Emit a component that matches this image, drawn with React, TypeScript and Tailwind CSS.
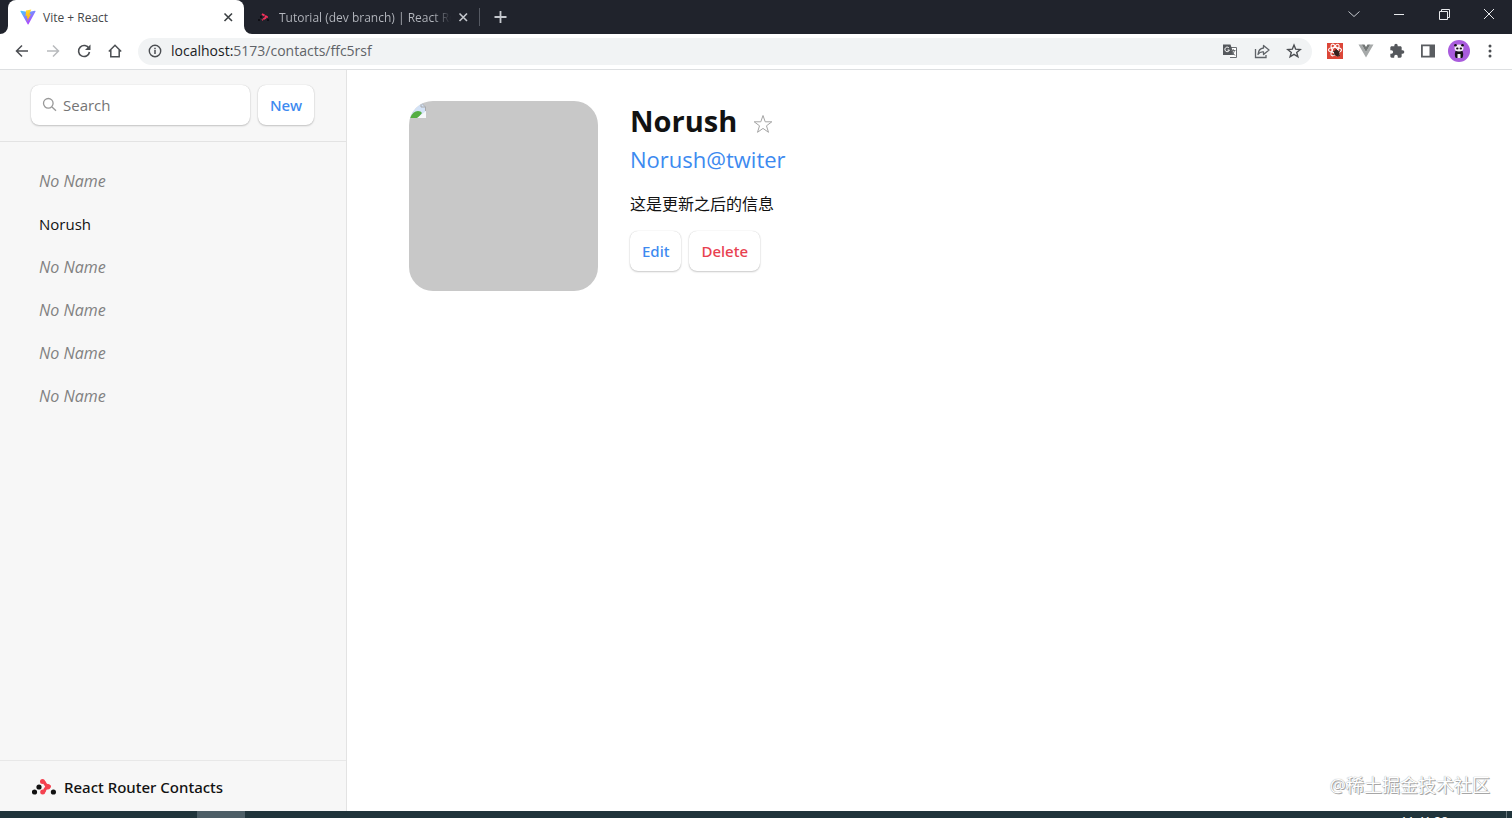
import { useState } from 'react';
import type { ReactNode } from 'react';

interface Contact {
  id: string;
  name?: string;
}

const contacts: Contact[] = [
  { id: 'a1' },
  { id: 'ffc5rsf', name: 'Norush' },
  { id: 'a3' },
  { id: 'a4' },
  { id: 'a5' },
  { id: 'a6' },
];

const cardShadow = 'shadow-[0_0_1px_rgba(0,0,0,0.2),0_1px_2px_rgba(0,0,0,0.2)]';
const buttonBase = `h-10 rounded-lg bg-white px-3 font-['Noto_Sans',sans-serif] text-[15px] font-medium ${cardShadow}`;

function ViteLogo() {
  return (
    <svg className="h-4 w-4 shrink-0" viewBox="0 0 32 32">
      <defs>
        <linearGradient id="vite-body" x1="0" y1="0" x2="0.7" y2="1">
          <stop offset="0" stopColor="#41d1ff" />
          <stop offset="1" stopColor="#bd34fe" />
        </linearGradient>
        <linearGradient id="vite-bolt" x1="0" y1="0" x2="0" y2="1">
          <stop offset="0" stopColor="#ffdd35" />
          <stop offset="1" stopColor="#ffa800" />
        </linearGradient>
      </defs>
      <path d="M31 5 17 30.5a1 1 0 0 1-1.700 0L1 5a1 1 0 0 1 1-1.500l14 2.500 14-2.500a1 1 0 0 1 1 1.500z" fill="url(#vite-body)" />
      <path d="M22.500 1 12 3l-.8 11.500 3.200-.8-.9 5 2-.6-1.200 7 7.500-14.500-3.200.6z" fill="url(#vite-bolt)" />
    </svg>
  );
}

function RouterLogo() {
  return (
    <svg className="h-4 w-6 shrink-0" viewBox="0 0 24 16">
      <path d="M10.500 2.500 12.500 3.300Q13 6.500 17.500 7.500Q13 8.500 12.500 12L10.500 13.300" fill="none" stroke="#f44250" strokeWidth="3" strokeLinejoin="round" />
      <circle cx="10.500" cy="2.500" r="2.500" fill="#f44250" />
      <circle cx="15.800" cy="7.700" r="2.700" fill="#f44250" />
      <circle cx="10.700" cy="13" r="2.500" fill="#f44250" />
      <circle cx="2.500" cy="13" r="2.600" fill="#121212" />
      <circle cx="7" cy="8" r="2.600" fill="#121212" />
      <circle cx="21.400" cy="13" r="2.600" fill="#121212" />
    </svg>
  );
}

function IconButton({ label, children }: { label: string; children: ReactNode }) {
  return (
    <button aria-label={label} className="flex h-4 w-4 shrink-0 items-center justify-center">
      {children}
    </button>
  );
}

function TabStrip() {
  return (
    <div className="flex h-[34px] shrink-0 items-end bg-[#20232c] pl-2">
      <div className="relative flex h-[34px] w-[236px] shrink-0 items-center rounded-t-lg bg-white pr-2 pl-3">
        <svg className="absolute bottom-0 -left-2 h-2 w-2" viewBox="0 0 8 8">
          <path d="M8 0v8H0a8 8 0 0 0 8-8z" fill="#fff" />
        </svg>
        <svg className="absolute -right-2 bottom-0 h-2 w-2" viewBox="0 0 8 8">
          <path d="M0 0v8h8a8 8 0 0 1-8-8z" fill="#fff" />
        </svg>
        <ViteLogo />
        <span className="ml-[7px] flex-1 pt-px text-xs text-[#45474a]">Vite + React</span>
        <IconButton label="Close Vite + React">
          <svg className="h-4 w-4" viewBox="0 0 16 16">
            <path d="m4.500 4.500 7.500 7.500m0-7.500-7.500 7.500" stroke="#3c4043" strokeWidth="1.600" />
          </svg>
        </IconButton>
      </div>
      <div className="flex h-[34px] w-[235px] shrink-0 items-center pr-2 pl-3">
        <svg className="h-4 w-4 shrink-0" viewBox="0 0 16 16">
          <path d="m6 5 5 3-5 3" fill="none" stroke="#f4315b" strokeWidth="2" strokeLinejoin="round" strokeDasharray="3 .6" />
          <circle cx="5" cy="8" r="1" fill="#08090c" />
          <circle cx="3" cy="11" r="1" fill="#08090c" />
          <circle cx="12" cy="11" r="1" fill="#08090c" />
        </svg>
        <span className="ml-[7px] w-[172px] overflow-hidden bg-linear-to-r from-[#b5b8bf] from-90% to-[#20232c] bg-clip-text pt-px text-xs whitespace-nowrap text-transparent">
          Tutorial (dev branch) | React Router
        </span>
        <span className="flex-1" />
        <IconButton label="Close Tutorial">
          <svg className="h-4 w-4" viewBox="0 0 16 16">
            <path d="m4.500 4.500 7.500 7.500m0-7.500-7.500 7.500" stroke="#c5c8ce" strokeWidth="1.600" />
          </svg>
        </IconButton>
      </div>
      <div className="mb-2 h-[18px] w-px bg-[#555962]" />
      <button aria-label="New tab" className="mb-[9px] ml-3">
        <svg className="h-4 w-4" viewBox="0 0 16 16">
          <path d="M8.500 2v12m-6-6h12" stroke="#c5c8ce" strokeWidth="1.800" />
        </svg>
      </button>
      <div className="mr-[15px] ml-auto flex h-7 items-center gap-[29px] self-start">
        <IconButton label="Search tabs">
          <svg className="h-4 w-4" viewBox="0 0 16 16">
            <path d="m2.500 5.500 5.500 5 5.500-5" fill="none" stroke="#c5c8ce" />
          </svg>
        </IconButton>
        <IconButton label="Minimize">
          <svg className="h-4 w-4" viewBox="0 0 16 16">
            <path d="M3 8.500h10" stroke="#e8eaed" />
          </svg>
        </IconButton>
        <IconButton label="Restore">
          <svg className="h-4 w-4" viewBox="0 0 16 16">
            <path d="M3.500 5.500h8v8h-8zM5.500 5.500v-2h8v8h-2" fill="none" stroke="#e8eaed" />
          </svg>
        </IconButton>
        <IconButton label="Close window">
          <svg className="h-4 w-4" viewBox="0 0 16 16">
            <path d="m3 3 10 10M13 3 3 13" stroke="#e8eaed" />
          </svg>
        </IconButton>
      </div>
    </div>
  );
}

function Toolbar() {
  return (
    <div className="flex h-9 shrink-0 items-center gap-[15px] border-b border-[#dddfe1] bg-white pr-[14px] pb-px pl-[14px]">
      <IconButton label="Back">
        <svg className="h-4 w-4" viewBox="0 0 16 16">
          <path d="M14 8H2.500M8 2.500 2.500 8 8 13.500" fill="none" stroke="#4b4e52" strokeWidth="1.500" />
        </svg>
      </IconButton>
      <IconButton label="Forward">
        <svg className="h-4 w-4" viewBox="0 0 16 16">
          <path d="M2 8h11.500M8 2.500 13.500 8 8 13.500" fill="none" stroke="#b8babd" strokeWidth="1.500" />
        </svg>
      </IconButton>
      <IconButton label="Reload">
        <svg className="h-4 w-4" viewBox="0 0 16 16">
          <path d="M13 5.500A5.500 5.500 0 1 0 13.500 9" fill="none" stroke="#4b4e52" strokeWidth="1.600" />
          <path d="M14.500 1.500v5.500H9z" fill="#4b4e52" />
        </svg>
      </IconButton>
      <IconButton label="Home">
        <svg className="h-4 w-4" viewBox="0 0 16 16">
          <path d="M1.800 8.500 8 2.300l6.200 6.200M3.800 7v6.800h8.400V7" fill="none" stroke="#4b4e52" strokeWidth="1.500" />
        </svg>
      </IconButton>
      <div className="flex h-[27px] min-w-0 flex-1 items-center rounded-full bg-[#f1f3f4] pr-[10px] pl-[9px]">
        <IconButton label="Site information">
          <svg className="h-4 w-4" viewBox="0 0 16 16">
            <circle cx="8" cy="8" r="5.700" fill="none" stroke="#4b4e52" strokeWidth="1.400" />
            <path d="M8 7v4M8 4.700v1.500" stroke="#4b4e52" strokeWidth="1.500" />
          </svg>
        </IconButton>
        <a href="#" className="ml-2 flex-1 text-sm text-[#5f6368]">
          <span className="text-[#202124]">localhost:</span>5173/contacts/ffc5rsf
        </a>
        <div className="flex items-center gap-4">
          <IconButton label="Translate">
            <svg className="h-4 w-4" viewBox="0 0 16 16">
              <path d="M7 4.500h7.500v10H8" fill="#fff" stroke="#6b6e72" />
              <path d="M1 1.500h7.500l3.500 10.500H1z" fill="#55585c" />
              <path d="M7 5a2.300 2.300 0 1 0 .4 2H5.500" fill="none" stroke="#fff" />
              <path d="M9 7.500h4.500M11.200 6v1.500m1.300 0q-.5 2.500-3 4.500m.5-3 3 3.500" fill="none" stroke="#6b6e72" />
            </svg>
          </IconButton>
          <IconButton label="Share">
            <svg className="h-4 w-4" viewBox="0 0 16 16">
              <path d="M1.500 6v8.500H12V12" fill="none" stroke="#5f6368" strokeWidth="1.300" />
              <path d="M9.500 2.500 15 7l-5.500 4.500V9Q6 8.500 4 11.500 4.500 5.500 9.500 5z" fill="none" stroke="#5f6368" strokeWidth="1.300" strokeLinejoin="round" />
            </svg>
          </IconButton>
          <IconButton label="Bookmark this tab">
            <svg className="h-4 w-4" viewBox="0 0 16 16">
              <path d="m8 2 1.700 4.200 4.500.3-3.500 2.900 1.200 4.400L8 11.400l-3.900 2.400 1.200-4.400L1.800 6.500l4.500-.3z" fill="none" stroke="#4b4e52" strokeWidth="1.400" />
            </svg>
          </IconButton>
        </div>
      </div>
      <IconButton label="React developer tools">
        <svg className="h-4 w-4" viewBox="0 0 16 16">
          <path d="M0 0h16v16H0z" fill="#dc4638" />
          <g fill="none" stroke="#fff" strokeWidth="1.100">
            <ellipse cx="8" cy="7" rx="6.500" ry="2.500" />
            <ellipse cx="8" cy="7" rx="6.500" ry="2.500" transform="rotate(60 8 7)" />
            <ellipse cx="8" cy="7" rx="6.500" ry="2.500" transform="rotate(120 8 7)" />
          </g>
          <ellipse cx="9.800" cy="10" rx="2.600" ry="3.300" fill="#35201e" transform="rotate(-25 9.800 10)" />
          <path d="m6 8 7 5M6 12l7-4M9 6l2 8" stroke="#35201e" strokeWidth=".9" />
        </svg>
      </IconButton>
      <IconButton label="Vue developer tools">
        <svg className="h-4 w-4" viewBox="0 0 16 16">
          <path d="M.5 1.500h3.200L8 9l4.300-7.500h3.200L8 14.500z" fill="#a6a9a9" />
          <path d="M3.700 1.500h2.800L8 4l1.500-2.500h2.800L8 9z" fill="#737776" />
        </svg>
      </IconButton>
      <IconButton label="Extensions">
        <svg className="h-4 w-4" viewBox="0 0 24 24">
          <path d="M20.500 11H19V7c0-1.100-.9-2-2-2h-4V3.500a2.500 2.500 0 0 0-5 0V5H4c-1.100 0-2 .9-2 2v3.800h1.500a2.700 2.700 0 0 1 0 5.400H2V20c0 1.100.9 2 2 2h3.800v-1.500a2.700 2.700 0 0 1 5.400 0V22H17c1.100 0 2-.9 2-2v-4h1.500a2.500 2.500 0 0 0 0-5z" fill="#55585c" />
        </svg>
      </IconButton>
      <IconButton label="Side panel">
        <svg className="h-4 w-4" viewBox="0 0 16 16">
          <path d="M1.900 2.400h12.200v11.200H1.900z" fill="none" stroke="#5a5d61" strokeWidth="1.800" />
          <path d="M9.500 2h4.600v12H9.500z" fill="#5a5d61" />
        </svg>
      </IconButton>
      <button aria-label="Profile" className="-mx-[3px]">
        <svg className="h-[22px] w-[22px]" viewBox="0 0 22 22">
          <circle cx="11" cy="11" r="11" fill="#a95bdd" />
          <path d="M7.500 11h7q1.500 4-.3 7H7.800q-1.800-3-.3-7z" fill="#151217" />
          <ellipse cx="11" cy="8" rx="4.500" ry="3.600" fill="#f3edf6" />
          <path d="M9.500 14h3v4h-3z" fill="#f3edf6" />
          <circle cx="7.500" cy="5.200" r="1.300" fill="#151217" />
          <circle cx="14.500" cy="5.200" r="1.300" fill="#151217" />
          <ellipse cx="9.300" cy="8.500" rx="1.200" ry=".9" fill="#151217" />
          <ellipse cx="12.800" cy="8.500" rx="1.200" ry=".9" fill="#151217" />
        </svg>
      </button>
      <IconButton label="Menu">
        <svg className="h-4 w-4" viewBox="0 0 16 16" fill="#4b4e52">
          <circle cx="8" cy="3" r="1.500" />
          <circle cx="8" cy="8" r="1.500" />
          <circle cx="8" cy="13" r="1.500" />
        </svg>
      </IconButton>
    </div>
  );
}

function Sidebar() {
  const [query, setQuery] = useState('');

  return (
    <aside className="flex w-[347px] shrink-0 flex-col border-r border-[#e3e3e3] bg-[#f7f7f7]">
      <div className="flex items-center gap-2 border-b border-[#e3e3e3] pt-[15px] pr-8 pb-4 pl-[31px]">
        <form role="search" className="relative min-w-0 flex-1" onSubmit={(e) => e.preventDefault()}>
          <svg className="absolute top-3 left-[11px] h-4 w-4" viewBox="0 0 16 16">
            <path d="M10 10 14 13.800" stroke="#999" strokeWidth="1.300" />
            <circle cx="6.300" cy="6.300" r="4.800" fill="none" stroke="#999" strokeWidth="1.300" />
          </svg>
          <input
            aria-label="Search contacts"
            placeholder="Search"
            value={query}
            onChange={(e) => setQuery(e.target.value)}
            className={`h-10 w-full rounded-lg bg-white pr-3 pl-8 text-[15px] placeholder:text-[#757575] ${cardShadow}`}
          />
        </form>
        <button className={`${buttonBase} text-[#3d8af0]`}>New</button>
      </div>
      <nav className="flex-1 overflow-auto px-[31px] pt-5">
        <ul>
          {contacts.map((contact) => (
            <li key={contact.id} className="mb-1">
              <a href="#" className="block rounded-lg p-2 text-[15px] leading-[23px]">
                {contact.name ? contact.name : <i className="text-base leading-[23px] text-[#818181]">No Name</i>}
              </a>
            </li>
          ))}
        </ul>
      </nav>
      <h1 className="flex items-center gap-2 border-t border-[#e8e8e8] px-8 pt-[14px] pb-3 font-['Noto_Sans',sans-serif] text-[15px] leading-6 font-medium">
        <RouterLogo />
        React Router Contacts
      </h1>
    </aside>
  );
}

function ContactDetails() {
  return (
    <main className="flex flex-1 items-start gap-8 bg-white px-[62px] pt-[31px]">
      <div role="img" aria-label="Avatar" className="h-[190px] w-[189px] shrink-0 overflow-hidden rounded-3xl bg-[#c8c8c8]">
        <svg className="h-[18px] w-[18px]" viewBox="0 0 18 18">
          <path d="M1 1h11l5 5v11H1z" fill="#d3e2f6" />
          <path d="M1 17q3-7 8-7 3 0 4 2l-4 5z" fill="#55ae43" />
          <path d="m8 17 9-7v7z" fill="#f6f8fa" />
          <path d="M1 1.500h11l4.500 4.500v4M12 1.500V6h4.500" fill="none" stroke="#aaa" />
        </svg>
      </div>
      <div>
        <h2 className="flex items-center gap-4 text-[29px] leading-[40px] font-bold text-[#121212]">
          Norush
          <button aria-label="Add to favorites">
            <svg className="mt-[6px] h-5 w-5" viewBox="0 0 20 20">
              <path d="m10 1.500 2.200 6.300h6.600l-5.300 4 2 6.500L10 14.400l-5.500 3.900 2-6.500-5.300-4h6.600z" fill="none" stroke="#a4a4a4" />
            </svg>
          </button>
        </h2>
        <a href="#" className="block text-[22px] leading-9 text-[#3d8af0]">Norush@twiter</a>
        <p className="mt-[15px] text-base leading-6">这是更新之后的信息</p>
        <div className="mt-[15px] flex gap-2">
          <button className={`${buttonBase} text-[#3d8af0]`}>Edit</button>
          <button className={`${buttonBase} text-[#e8414f]`}>Delete</button>
        </div>
      </div>
    </main>
  );
}

export default function App() {
  return (
    <div className="relative flex h-screen flex-col overflow-hidden font-['Open_Sans','Noto_Sans_CJK_SC',sans-serif] text-[#121212]">
      <TabStrip />
      <Toolbar />
      <div className="flex min-h-0 flex-1">
        <Sidebar />
        <ContactDetails />
      </div>
      <footer className="flex h-[7px] shrink-0 justify-between overflow-hidden bg-[#20343b] pl-[197px]">
        <div className="w-12 bg-[#4d5e66]" />
        <div className="flex">
          <time className="mr-[58px] pt-[3px] text-xs leading-4 text-white">11:41:38</time>
          <span className="mr-[5px] w-px bg-[#68777d]" />
        </div>
      </footer>
      <div className="absolute right-[22px] bottom-[19px] text-lg text-white [text-shadow:0_0_1px_#888,1px_1px_0_#aaa]">
        @稀土掘金技术社区
      </div>
    </div>
  );
}
